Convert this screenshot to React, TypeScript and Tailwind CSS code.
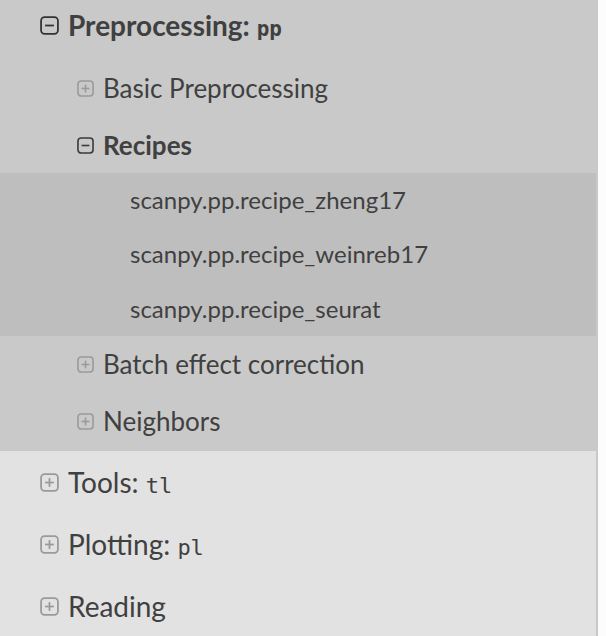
import type { ReactNode } from 'react'

function BoxIcon({ open, size, color }: { open: boolean; size: number; color: string }) {
  return (
    <svg width={size} height={size} viewBox="0 0 16 16" fill="none" className="shrink-0">
      <rect x="0.9" y="0.9" width="14.2" height="14.2" rx="3" stroke={color} strokeWidth="1.5" />
      <line x1="4.3" y1="8" x2="11.7" y2="8" stroke={color} strokeWidth="1.5" />
      {!open && <line x1="8" y1="4.3" x2="8" y2="11.7" stroke={color} strokeWidth="1.5" />}
    </svg>
  )
}

const mono = "font-['DejaVu_Sans_Mono',monospace]"

function TopRow({ open, children, dim }: { open: boolean; children: ReactNode; dim?: boolean }) {
  return (
    <div className="flex h-[62px] items-center gap-[9px] pl-[40px]">
      <BoxIcon open={open} size={19} color={dim ? '#9a9a9a' : '#333333'} />
      <span className="text-[28px]">{children}</span>
    </div>
  )
}

function SubRow({ open, label, tight }: { open: boolean; label: string; tight?: boolean }) {
  return (
    <div className={`flex items-center gap-[9px] pl-[77px] ${tight ? 'h-[56px]' : 'h-[57px]'}`}>
      <BoxIcon open={open} size={17} color={open ? '#3a3a3a' : '#9a9a9a'} />
      <span className={open ? 'text-[26px] font-bold' : 'text-[26px]'}>{label}</span>
    </div>
  )
}

const recipes = ['scanpy.pp.recipe_zheng17', 'scanpy.pp.recipe_weinreb17', 'scanpy.pp.recipe_seurat']

export default function App() {
  return (
    <main className="flex min-h-screen bg-[#fcfcfc] font-['Lato',sans-serif] text-[#404040]">
      <nav className="flex w-[598px] flex-col bg-[#c9c9c9]">
        <section className="pb-[1px]">
          <div className="flex h-[50px] items-center gap-[9px] pl-[40px]">
            <BoxIcon open size={19} color="#333333" />
            <span className="text-[28px] font-bold">
              Preprocessing: <code className={`${mono} text-[21px] font-bold`}>pp</code>
            </span>
          </div>
          <div className="pt-[10px]">
            <SubRow open={false} label="Basic Preprocessing" />
            <SubRow open label="Recipes" tight />
          </div>
          <ul className="w-[596px] bg-[#bebebe]">
            {recipes.map((r) => (
              <li key={r} className="flex h-[55px] items-center pl-[130px] text-[24px] first:h-[53px]">
                {r}
              </li>
            ))}
          </ul>
          <SubRow open={false} label="Batch effect correction" />
          <SubRow open={false} label="Neighbors" />
        </section>
        <section className="w-[596px] flex-1 bg-[#e2e2e2]">
          <TopRow open={false} dim>
            Tools: <code className={`${mono} text-[22px]`}>tl</code>
          </TopRow>
          <TopRow open={false} dim>
            Plotting: <code className={`${mono} text-[22px]`}>pl</code>
          </TopRow>
          <TopRow open={false} dim>
            Reading
          </TopRow>
        </section>
      </nav>
    </main>
  )
}
